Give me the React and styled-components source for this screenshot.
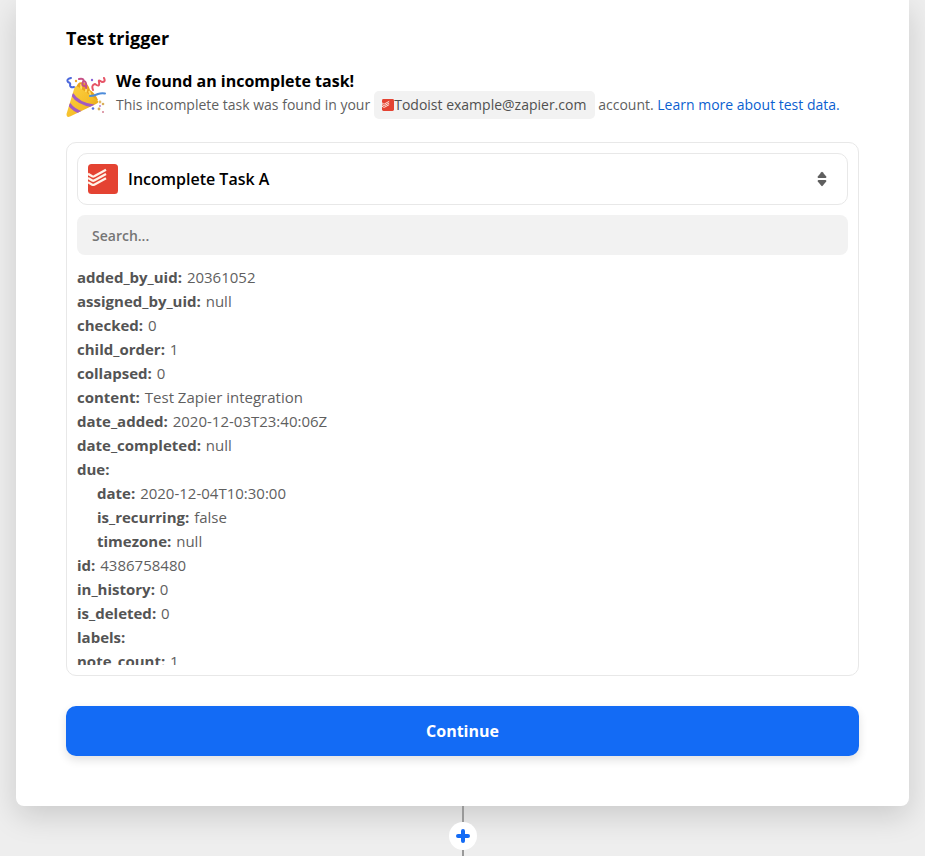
import React from 'react';
import styled, { createGlobalStyle } from 'styled-components';

const GlobalStyle = createGlobalStyle`
  * { box-sizing: border-box; }
  body {
    margin: 0;
    background: #eeeeee;
    font-family: "Open Sans", "Noto Sans", sans-serif;
    color: #000;
  }
`;

const Page = styled.div`
  display: flex;
  flex-direction: column;
  align-items: center;
  height: 856px;
  overflow: hidden;
`;

const Card = styled.section`
  width: 893px;
  height: 806px;
  flex: none;
  padding: 26px 50px 50px;
  background: #fff;
  border-radius: 0 0 8px 8px;
  box-shadow: 0 10px 30px rgba(0, 0, 0, 0.15);
`;

const Title = styled.h2`
  margin: 0 0 19px;
  font-size: 18px;
  font-weight: 700;
  line-height: 24px;
`;

const Notice = styled.div`
  display: flex;
  gap: 10px;
  height: 48px;
  margin-bottom: 25px;
`;

const PopperIcon = styled.svg`
  width: 40px;
  height: 42px;
  margin-top: 7px;
  flex: none;
`;

const NoticeTitle = styled.h3`
  margin: 0;
  font-size: 16px;
  font-weight: 700;
  line-height: 24px;
`;

const NoticeText = styled.p`
  display: flex;
  align-items: center;
  height: 24px;
  margin: 0;
  font-size: 14px;
  line-height: 24px;
  color: #5f5f5f;
  white-space: pre;
`;

const Account = styled.span`
  display: flex;
  align-items: center;
  height: 28px;
  width: 221px;
  margin: 0 3px 0 4px;
  padding: 0 8px;
  border-radius: 5px;
  background: #f2f2f2;
  color: #505050;
`;

const Link = styled.a`
  color: #0b5fd0;
  text-decoration: none;
`;

const Panel = styled.div`
  display: flex;
  flex-direction: column;
  gap: 10px;
  height: 534px;
  padding: 10px;
  border: 1px solid #e8e8e8;
  border-radius: 10px;
`;

const Select = styled.button`
  display: flex;
  align-items: center;
  flex: none;
  height: 52px;
  padding: 0 20px 0 10px;
  border: 1px solid #e8e8e8;
  border-radius: 10px;
  background: #fff;
  font: 600 16px/24px "Open Sans", sans-serif;
  color: #000;
`;

const SelectLabel = styled.span`
  margin-left: 10px;
  flex: 1;
  text-align: left;
`;

const Search = styled.input`
  flex: none;
  height: 40px;
  padding: 0 15px 0;
  border: 0;
  border-radius: 8px;
  background: #f2f2f2;
  font: 600 14px/24px "Open Sans", sans-serif;
  &::placeholder { color: #757575; opacity: 1; }
`;

const Fields = styled.div`
  flex: 1;
  min-height: 0;
  overflow: hidden;
  font-size: 15px;
  line-height: 24px;
  color: #5f5f5f;
`;

const Field = styled.div`
  padding-left: ${props => (props.$nested ? 20 : 0)}px;
`;

const Key = styled.b`
  margin-right: 1px;
  font-weight: 700;
  color: #545454;
`;

const Continue = styled.button`
  display: block;
  width: 100%;
  height: 50px;
  margin-top: 30px;
  border: 0;
  border-radius: 10px;
  background: #136bf5;
  box-shadow: 0 4px 10px rgba(0, 0, 0, 0.12);
  font: 700 16px/24px "Open Sans", sans-serif;
  color: #fff;
`;

const Connector = styled.div`
  display: flex;
  flex-direction: column;
  align-items: center;
  flex: none;
  width: 28px;
  margin-left: 1px;
  z-index: 1;
`;

const Line = styled.div`
  width: 2px;
  height: 16px;
  background: #999;
`;

const AddStep = styled.button`
  display: flex;
  align-items: center;
  justify-content: center;
  width: 28px;
  height: 28px;
  padding: 0;
  border: 0;
  border-radius: 50%;
  background: #fff;
`;

const FIELDS = [
  ['added_by_uid', '20361052'],
  ['assigned_by_uid', 'null'],
  ['checked', '0'],
  ['child_order', '1'],
  ['collapsed', '0'],
  ['content', 'Test Zapier integration'],
  ['date_added', '2020-12-03T23:40:06Z'],
  ['date_completed', 'null'],
  ['due', ''],
  ['date', '2020-12-04T10:30:00', true],
  ['is_recurring', 'false', true],
  ['timezone', 'null', true],
  ['id', '4386758480'],
  ['in_history', '0'],
  ['is_deleted', '0'],
  ['labels', ''],
  ['note_count', '1'],
];

const TodoistLogo = ({ size }) => (
  <svg width={size} height={size} viewBox="0 0 30 30">
    <rect width="30" height="30" rx="3.5" fill="#e44332" />
    <g fill="none" stroke="#fff3e8" strokeWidth="2.3" strokeLinejoin="round">
      <path d="M0 9.8 L4.2 12.3 Q5.2 12.8 6.200 12.3 L18 5.8" />
      <path d="M0 14 L4.2 16.5 Q5.2 17 6.200 16.5 L18 10" />
      <path d="M0 18.200 L4.2 20.700 Q5.2 21.200 6.200 20.700 L18 14.200" />
    </g>
  </svg>
);

const PartyPopper = () => (
  <PopperIcon viewBox="0 0 40 42">
    <defs>
      <linearGradient id="cone" x1="0" y1="0" x2="1" y2="1">
        <stop offset="0" stopColor="#ffd84d" />
        <stop offset="0.6" stopColor="#f5bd27" />
        <stop offset="1" stopColor="#c98411" />
      </linearGradient>
      <clipPath id="coneClip">
        <path d="M0.5 38 L8.500 11.500 Q10 9 14 12 L31 24 Q34 26 30 28 L4 40.500 Q0.500 42 0.500 38Z" />
      </clipPath>
    </defs>
    <path d="M10 12 Q12 4 18 7 Q22 7 24 14 Q29 17 32 24 L24 25Z" fill="#e9a51d" />
    <path d="M14 15 Q16 11 15 8 M19 18 Q21 14 20 10 M24 21 Q25 18 23 15" fill="none" stroke="#ffdc62" strokeWidth="2" />
    <g clipPath="url(#coneClip)">
      <rect width="40" height="42" fill="url(#cone)" />
      <path d="M6 18 Q12 28 28 30 M3 28 Q8 35 17 37" fill="none" stroke="#a25bc2" strokeWidth="3.2" />
    </g>
    <g fill="none" strokeWidth="2" strokeLinecap="round">
      <path d="M5 2 Q0 3 2 6 Q5 7 4 9 Q4 12 8 11" stroke="#4b68dc" />
      <path d="M13 3 Q19 2 17 6 Q15 10 19 10 M18 5 Q21 6 20 12" stroke="#c75187" />
      <path d="M27 14 Q25 9 29 8 Q34 12 33 6 Q32 3 36 6 Q40 6 38 2" stroke="#e65467" />
      <path d="M24 20 Q28 20 32 18 Q35 17 39 17.500" stroke="#4d8cda" />
    </g>
    <g>
      <circle cx="10" cy="5" r="1.2" fill="#eba82a" />
      <circle cx="26" cy="4" r="1.2" fill="#8b62d5" />
      <circle cx="27" cy="32.500" r="1.300" fill="#526fdc" />
      <circle cx="34" cy="26" r="1.400" fill="#e4ba67" />
      <circle cx="37" cy="28" r="1.300" fill="#d9ad5b" />
      <circle cx="33" cy="33" r="1.400" fill="#d9ad5b" />
      <circle cx="37" cy="36" r="1" fill="#d48193" />
      <circle cx="34" cy="30" r="1" fill="#b67ad7" />
    </g>
  </PopperIcon>
);

const App = () => (
  <Page>
    <GlobalStyle />
    <Card>
      <Title>Test trigger</Title>
      <Notice>
        <PartyPopper />
        <div>
          <NoticeTitle>We found an incomplete task!</NoticeTitle>
          <NoticeText>
            This incomplete task was found in your
            <Account>
              <TodoistLogo size={12} />
              Todoist example@zapier.com
            </Account>
            {'account. '}
            <Link>Learn more about test data.</Link>
          </NoticeText>
        </div>
      </Notice>
      <Panel>
        <Select>
          <TodoistLogo size={30} />
          <SelectLabel>Incomplete Task A</SelectLabel>
          <svg width="10" height="16" viewBox="0 0 10 16" fill="#5f5f5f">
            <path d="M4.300 1.200 Q5 0.500 5.700 1.200 L9.200 5.400 Q9.800 7 8.500 7 H1.500 Q0.200 7 0.800 5.400Z" />
            <path d="M4.300 14.800 Q5 15.500 5.700 14.800 L9.200 10.600 Q9.800 9 8.500 9 H1.500 Q0.200 9 0.800 10.600Z" />
          </svg>
        </Select>
        <Search placeholder="Search..." />
        <Fields>
          {FIELDS.map(([name, value, nested]) => (
            <Field key={name} $nested={nested}>
              <Key>{name}:</Key> {value}
            </Field>
          ))}
        </Fields>
      </Panel>
      <Continue>Continue</Continue>
    </Card>
    <Connector>
      <Line />
      <AddStep>
        <svg width="14" height="14" viewBox="0 0 14 14">
          <path d="M7 2 V12 M2 7 H12" stroke="#136bf5" strokeWidth="4" strokeLinecap="round" />
        </svg>
      </AddStep>
      <Line />
    </Connector>
  </Page>
);

export default App;
